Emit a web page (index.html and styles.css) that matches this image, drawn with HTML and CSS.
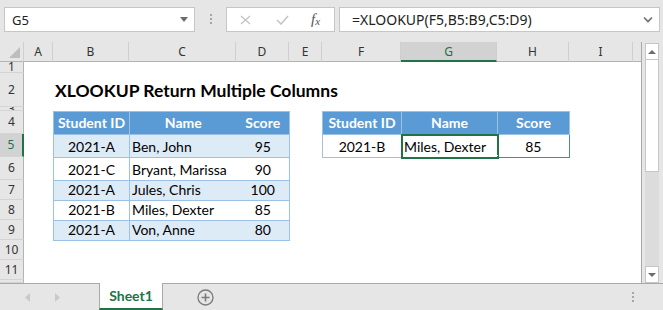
FILE: index.html
```html
<!DOCTYPE html>
<html lang="en">
<head>
  <meta charset="UTF-8">
  <title>XLOOKUP Return Multiple Columns</title>
  <link rel="stylesheet" href="styles.css">
</head>
<body>
  <div class="app">
    <div class="toolbar">
      <div class="namebox"><span>G5</span><span class="caret"></span></div>
      <div class="grip"><i></i><i></i><i></i></div>
      <div class="fxbox">
        <svg width="11" height="10" viewBox="0 0 11 10"><path d="M1 1 L10 9 M10 1 L1 9" stroke="#c3c3c3" stroke-width="1.3" fill="none"/></svg>
        <svg width="13" height="10" viewBox="0 0 13 10"><path d="M1 5 L5 9 L12 1" stroke="#c3c3c3" stroke-width="1.5" fill="none"/></svg>
        <span class="fx">f<sub>x</sub></span>
      </div>
      <div class="formula">
        <span>=XLOOKUP(F5,B5:B9,C5:D9)</span>
        <svg width="10" height="7" viewBox="0 0 10 7"><path d="M1 1.5 L5 5.5 L9 1.5" stroke="#6d6d6d" stroke-width="1.6" fill="none"/></svg>
      </div>
    </div>

    <div class="sheet">
      <div class="body"></div>
      <div class="scroll">
        <div class="arrow"><span class="up"></span></div>
        <div class="thumb"></div>
        <div class="track"></div>
        <div class="arrow"><span class="down"></span></div>
      </div>

      <div class="ch corner"><span></span></div>
      <div class="ch">A</div>
      <div class="ch">B</div>
      <div class="ch">C</div>
      <div class="ch">D</div>
      <div class="ch">E</div>
      <div class="ch">F</div>
      <div class="ch active">G</div>
      <div class="ch">H</div>
      <div class="ch">I</div>
      <div class="ch"></div>

      <div class="rh">1</div>
      <div class="rh">2</div>
      <div class="rh">3</div>
      <div class="rh">4</div>
      <div class="rh active">5</div>
      <div class="rh">6</div>
      <div class="rh">7</div>
      <div class="rh">8</div>
      <div class="rh">9</div>
      <div class="rh">10</div>
      <div class="rh">11</div>
      <div class="rh"></div>

      <div class="title">XLOOKUP Return Multiple Columns</div>

      <table class="data t1">
        <colgroup><col style="width:76px"><col style="width:107px"><col style="width:53px"></colgroup>
        <tr class="head"><th class="sep">Student ID</th><th>Name</th><th>Score</th></tr>
        <tr class="band tall"><td class="sep">2021-A</td><td class="name">Ben, John</td><td>95</td></tr>
        <tr class="tall"><td class="sep">2021-C</td><td class="name">Bryant, Marissa</td><td>90</td></tr>
        <tr class="band"><td class="sep">2021-A</td><td class="name">Jules, Chris</td><td>100</td></tr>
        <tr><td class="sep">2021-B</td><td class="name">Miles, Dexter</td><td>85</td></tr>
        <tr class="band"><td class="sep">2021-A</td><td class="name">Von, Anne</td><td>80</td></tr>
      </table>

      <table class="data t2">
        <colgroup><col style="width:79px"><col style="width:96px"><col style="width:72px"></colgroup>
        <tr class="head"><th class="sep">Student ID</th><th class="sep">Name</th><th>Score</th></tr>
        <tr class="tall"><td class="sep">2021-B</td><td class="name selected">Miles, Dexter<span class="handle"></span></td><td class="edge">85</td></tr>
      </table>
    </div>

    <div class="tabs">
      <div class="nav">
        <svg width="6" height="9" viewBox="0 0 6 9"><path d="M5 0 L0 4.5 L5 9 Z" fill="#c9c9c9"/></svg>
        <svg width="6" height="9" viewBox="0 0 6 9"><path d="M1 0 L6 4.5 L1 9 Z" fill="#c9c9c9"/></svg>
      </div>
      <div class="tab">Sheet1</div>
      <div class="add">
        <svg width="17" height="17" viewBox="0 0 17 17"><circle cx="8.5" cy="8.5" r="7.5" stroke="#7a7a7a" stroke-width="1.3" fill="none"/><path d="M8.5 4.5 V12.5 M4.5 8.5 H12.5" stroke="#7a7a7a" stroke-width="1.6"/></svg>
      </div>
      <div class="spacer"></div>
      <div class="grip bottom"><i></i><i></i><i></i></div>
    </div>
  </div>
</body>
</html>
```

FILE: styles.css
```css
* {
  box-sizing: border-box;
}
body {
  margin: 0;
  background: #e6e6e6;
  font-family: "Noto Sans", sans-serif;
}
.app {
  width: 663px;
  height: 310px;
  overflow: hidden;
  display: flex;
  flex-direction: column;
}

/* formula bar */
.toolbar {
  height: 42px;
  flex: none;
  display: flex;
  align-items: flex-start;
  padding: 7px 0 0 4px;
}
.namebox {
  width: 191px;
  height: 25px;
  background: #fff;
  border: 1px solid #c6c6c6;
  display: flex;
  align-items: center;
  justify-content: space-between;
  padding: 0 6px 0 7px;
  font-size: 13px;
  color: #222;
}
.caret {
  width: 0;
  height: 0;
  border-left: 4px solid transparent;
  border-right: 4px solid transparent;
  border-top: 5px solid #6d6d6d;
}
.grip {
  width: 31px;
  display: flex;
  flex-direction: column;
  align-items: center;
  gap: 2px;
  padding-top: 7px;
}
.grip i {
  width: 2px;
  height: 2px;
  background: #a6a6a6;
}
.fxbox {
  width: 109px;
  height: 25px;
  background: #fff;
  border: 1px solid #c6c6c6;
  display: flex;
  align-items: center;
  padding: 0 0 0 13px;
}
.fxbox svg:first-child {
  margin-right: 25px;
}
.fx {
  margin-left: 22px;
  font-family: "Liberation Serif", serif;
  font-style: italic;
  font-size: 15px;
  color: #555;
  line-height: 1;
}
.fx sub {
  font-size: 11px;
  vertical-align: -1px;
}
.formula {
  margin-left: 4px;
  width: 321px;
  height: 25px;
  background: #fff;
  border: 1px solid #c6c6c6;
  display: flex;
  align-items: center;
  justify-content: space-between;
  padding: 0 6px 0 12px;
  font-size: 14px;
  color: #222;
}

/* grid */
.sheet {
  flex: none;
  display: grid;
  grid-template-columns: 24px 29px 76px 107px 53px 33px 79px 96px 72px 64px 9px 21px;
  grid-template-rows: 20px 11px 34px 4px 23px 23px 23px 20px 20px 20px 20px 20px 3px;
}
.body {
  grid-column: 2 / 12;
  grid-row: 2 / -1;
  background: #fff;
  border-right: 1px solid #a9a9a9;
}
.ch {
  background: #e6e6e6;
  border-right: 1px solid #cfcfcf;
  border-bottom: 1px solid #b3b3b3;
  display: flex;
  align-items: center;
  justify-content: center;
  font-size: 12px;
  color: #333;
}
.ch:nth-child(13) {
  border-right: 1px solid #a9a9a9;
}
.ch.active {
  background: #d2d2d2;
  color: #217346;
  border-bottom: 2px solid #217346;
}
.corner {
  position: relative;
}
.corner span {
  position: absolute;
  right: 3px;
  bottom: 3px;
  width: 0;
  height: 0;
  border-left: 11px solid transparent;
  border-bottom: 11px solid #bdbdbd;
}
.rh {
  grid-column: 1;
  background: #e6e6e6;
  border-right: 1px solid #b3b3b3;
  border-bottom: 1px solid #d4d4d4;
  display: flex;
  align-items: center;
  justify-content: center;
  font-size: 12px;
  color: #333;
  overflow: hidden;
  line-height: 1;
}
.rh.active {
  background: #d2d2d2;
  color: #217346;
  border-right: 2px solid #217346;
}
.scroll {
  grid-column: 12;
  grid-row: 1 / -1;
  display: flex;
  flex-direction: column;
  padding: 1px 4px 0 3px;
}
.arrow {
  height: 17px;
  flex: none;
  background: #fff;
  border: 1px solid #c6c6c6;
  display: flex;
  align-items: center;
  justify-content: center;
}
.up, .down {
  width: 0;
  height: 0;
  border-left: 4px solid transparent;
  border-right: 4px solid transparent;
}
.up {
  border-bottom: 4px solid #6d6d6d;
}
.down {
  border-top: 4px solid #6d6d6d;
}
.thumb {
  height: 112px;
  flex: none;
  background: #fff;
  border: 1px solid #c6c6c6;
  border-top: 0;
}
.track {
  flex: 1;
  background: #dcdcdc;
}

.title {
  grid-column: 3 / 10;
  grid-row: 3;
  align-self: center;
  padding-left: 2px;
  font-family: Lato, sans-serif;
  font-weight: bold;
  font-size: 17.5px;
  color: #000;
}

/* excel tables */
.data {
  border-collapse: collapse;
  table-layout: fixed;
  width: 100%;
  height: 100%;
  font-family: Lato, sans-serif;
  font-size: 14px;
  color: #000;
}
.t1 {
  grid-column: 3 / 6;
  grid-row: 5 / 11;
}
.t2 {
  grid-column: 7 / 10;
  grid-row: 5 / 7;
}
.data tr {
  height: 20px;
}
.data tr.head, .data tr.tall {
  height: 23px;
}
.data th, .data td {
  padding: 0 2px 1px;
  text-align: center;
  vertical-align: bottom;
  line-height: 18px;
  border: 1px solid #9bc2e6;
  border-left: 0;
  border-right: 0;
  white-space: nowrap;
  overflow: hidden;
}
.data th {
  background: #5b9bd5;
  color: #fff;
  font-weight: bold;
  padding-bottom: 2px;
}
.data th:first-child, .data td:first-child {
  border-left: 1px solid #9bc2e6;
}
.data th:last-child, .data td:last-child {
  border-right: 1px solid #9bc2e6;
}
.data .sep {
  border-right: 1px solid #9bc2e6;
}
.data .band td {
  background: #ddebf7;
}
.data td.name {
  text-align: left;
}
.selected {
  position: relative;
  outline: 2px solid #217346;
  outline-offset: -1px;
  overflow: visible;
}
.handle {
  position: absolute;
  right: -4px;
  bottom: -4px;
  width: 6px;
  height: 6px;
  background: #217346;
  border: 1px solid #fff;
}
.data td.edge {
  border-right: 1px solid #4f7fc0;
  border-bottom: 1px solid #4f7fc0;
}

/* sheet tabs */
.tabs {
  flex: 1;
  display: flex;
  border-top: 1px solid #a9a9a9;
}
.nav {
  width: 99px;
  display: flex;
  align-items: center;
  gap: 23px;
  padding-left: 25px;
}
.tab {
  width: 64px;
  margin-top: -1px;
  background: #fff;
  border-left: 1px solid #a9a9a9;
  border-right: 1px solid #a9a9a9;
  border-bottom: 2px solid #217346;
  display: flex;
  align-items: center;
  justify-content: center;
  font-family: Lato, sans-serif;
  font-weight: bold;
  font-size: 14px;
  color: #217346;
}
.add {
  width: 84px;
  display: flex;
  align-items: center;
  justify-content: center;
}
.spacer {
  flex: 1;
}
.grip.bottom {
  width: 18px;
  margin-right: 21px;
  padding-top: 8px;
}
```
